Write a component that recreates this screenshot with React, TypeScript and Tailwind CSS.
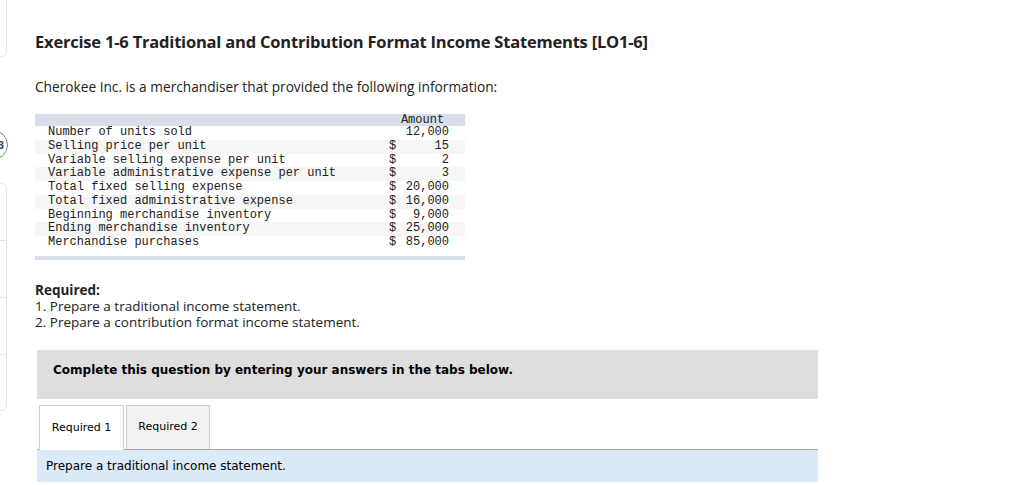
import React from 'react';

const ROWS: { label: string; cur: string; value: string }[] = [
  { label: 'Number of units sold', cur: '', value: '12,000' },
  { label: 'Selling price per unit', cur: '$', value: '15' },
  { label: 'Variable selling expense per unit', cur: '$', value: '2' },
  { label: 'Variable administrative expense per unit', cur: '$', value: '3' },
  { label: 'Total fixed selling expense', cur: '$', value: '20,000' },
  { label: 'Total fixed administrative expense', cur: '$', value: '16,000' },
  { label: 'Beginning merchandise inventory', cur: '$', value: '9,000' },
  { label: 'Ending merchandise inventory', cur: '$', value: '25,000' },
  { label: 'Merchandise purchases', cur: '$', value: '85,000' },
];

const SideRail = () => (
  <div className="w-[8px] shrink-0 relative">
    {/* clipped sidebar cards from the page beside */}
    <div className="ml-[-30px] mt-[-10px] h-[67px] w-[37px] border border-gray-200 rounded-md bg-white" />
    <div className="ml-[-22px] mt-[73px] h-[30px] w-[30px] rounded-full border border-[#5a9a52] bg-white flex items-center justify-end pr-[3px] text-[10px] font-bold text-gray-700">
      3
    </div>
    <div className="ml-[-30px] mt-[23px] w-[37px] border border-gray-200 rounded-md bg-white flex flex-col">
      <div className="h-[57px] border-b border-gray-200" />
      <div className="h-[57px] border-b border-gray-200" />
      <div className="h-[57px] border-b border-gray-200" />
      <div className="h-[55px]" />
    </div>
  </div>
);

const DataTable = () => (
  <div className="w-[430px] font-['Liberation_Mono',monospace] text-[12px] leading-[13.75px] text-[#222]">
    <div className="bg-[#d9dee8] flex h-[12px] leading-[12px]">
      <div className="flex-1" />
      <div className="w-[76px] text-center pr-[9px]">Amount</div>
    </div>
    {ROWS.map((r, i) => (
      <div key={r.label} className={`flex ${i % 2 === 1 ? 'bg-[#f6f6f6]' : 'bg-white'}`}>
        <div className="flex-1 pl-[13px]">{r.label}</div>
        <div className="w-[76px] flex justify-between pr-[16px]">
          <span>{r.cur}</span>
          <span>{r.value}</span>
        </div>
      </div>
    ))}
    <div className="mt-[6px] h-[4px] bg-[#d9dee8]" />
  </div>
);

export default function App() {
  return (
    <div className="w-[1024px] h-[485px] overflow-hidden bg-white flex">
      <SideRail />
      <div className="ml-[27px] flex flex-col font-['Open_Sans','Lato',sans-serif] text-[#222]">
        <h1 className="mt-[31px] text-[16.5px] leading-[22px] font-bold tracking-[-0.2px]">
          Exercise 1-6 Traditional and Contribution Format Income Statements [LO1-6]
        </h1>
        <p className="mt-[25px] text-[13.7px] leading-[18px]">
          Cherokee Inc. is a merchandiser that provided the following information:
        </p>
        <div className="mt-[18px]">
          <DataTable />
        </div>
        <div className="mt-[22px] text-[13.5px] leading-[16px]">
          <div className="font-bold">Required:</div>
          <div>1. Prepare a traditional income statement.</div>
          <div>2. Prepare a contribution format income statement.</div>
        </div>
        <div className="mt-[20px] ml-[2px] w-[781px] flex flex-col font-['DejaVu_Sans','Verdana',sans-serif]">
          <div className="h-[49px] bg-[#dedede] pt-[13px] pl-[16px] text-[12px] leading-[14px] font-bold text-black">
            Complete this question by entering your answers in the tabs below.
          </div>
          <div className="mt-[6px] flex gap-[2px] pl-[2px] border-b border-[#a8a8a8] text-[11px] text-black">
            <div className="h-[45px] w-[85px] flex items-center justify-center bg-white border border-b-0 border-[#cfcfcf] mb-[-1px]">
              Required 1
            </div>
            <div className="h-[44px] w-[84px] flex items-center justify-center bg-[#f2f2f2] border border-b-0 border-[#cfcfcf]">
              Required 2
            </div>
          </div>
          <div className="h-[32px] bg-[#dbeaf8] flex items-center pl-[9px] text-[12px] text-black">
            Prepare a traditional income statement.
          </div>
        </div>
      </div>
    </div>
  );
}
